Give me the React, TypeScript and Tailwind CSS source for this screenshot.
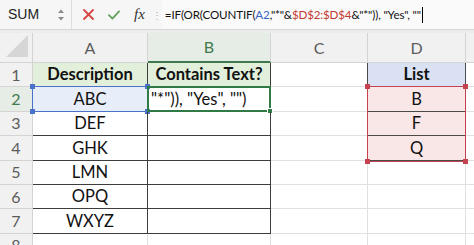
import React from "react";

const COLS = ["w-[33px]", "w-[115px]", "w-[123px]", "w-[97px]", "w-[98px]", "flex-1"];

const NAMES = ["Description", "ABC", "DEF", "GHK", "LMN", "OPQ", "WXYZ", ""];
const LIST = ["List", "B", "F", "Q"];

function Handle({ pos, color }: { pos: string; color: string }) {
  return <span className={`absolute w-[5px] h-[5px] ${pos} ${color}`} />;
}

export default function App() {
  return (
    <div className="w-[474px] h-[245px] overflow-hidden bg-white font-['Lato',sans-serif] text-[#111]">
      {/* Formula bar */}
      <div className="flex items-center h-[30px] bg-[#f6f6f6] border-b border-[#d6d6d6]">
        <div className="w-[72px] h-full flex items-center justify-between pl-[8px] pr-[6px] border-r border-[#dedede]">
          <span className="text-[14px] text-[#222] font-['Liberation_Sans',sans-serif]">SUM</span>
          <svg width="8" height="14" viewBox="0 0 8 14">
            <path d="M1 5 L4 1.5 L7 5 Z" fill="#8a8a8a" />
            <path d="M1 9 L4 12.5 L7 9 Z" fill="#8a8a8a" />
          </svg>
        </div>
        <div className="flex items-center h-full">
          <svg className="ml-[11px]" width="11" height="11" viewBox="0 0 11 11">
            <path d="M1 1 L10 10 M10 1 L1 10" stroke="#d64541" strokeWidth="1.8" strokeLinecap="round" />
          </svg>
          <svg className="ml-[14px]" width="12" height="10" viewBox="0 0 12 10">
            <path d="M1 5.2 L4.4 8.6 L11 1.4" stroke="#62a05d" strokeWidth="1.8" fill="none" strokeLinecap="round" strokeLinejoin="round" />
          </svg>
          <span className="ml-[14px] text-[15px] italic text-[#333] font-['Liberation_Serif',serif] leading-none">fx</span>
          <span className="ml-[7px] text-[10px] text-[#b0b0b0] leading-none">⋮</span>
        </div>
        <div className="flex-1 h-full flex items-center bg-[#fafafa] pl-[3px] text-[11.6px] tracking-[-0.15px] whitespace-nowrap">
          <span>=IF(OR(COUNTIF(</span>
          <span className="text-[#3b62be]">A2</span>
          <span>,"*"&amp;</span>
          <span className="text-[#c23b32]">$D$2:$D$4</span>
          <span>&amp;"*")), "Yes", ""</span>
          <span className="w-[1px] h-[16px] bg-black ml-[1px]" />
        </div>
      </div>
      <div className="h-[3px] bg-[#ececec]" />

      {/* Column headers */}
      <div className="flex h-[30px] bg-[#f1f1f1] text-[16px] text-[#5c5c5c]">
        <div className={`${COLS[0]} relative border-r border-b border-[#d4d4d4]`}>
          <svg className="absolute right-[4px] bottom-[5px]" width="22" height="22" viewBox="0 0 22 22">
            <path d="M22 0 L22 22 L0 22 Z" fill="#d6d6d6" />
          </svg>
        </div>
        <div className={`${COLS[1]} flex items-center justify-center border-r border-b border-[#d4d4d4]`}>A</div>
        <div className={`${COLS[2]} flex items-center justify-center border-r border-b-2 border-r-[#d4d4d4] border-b-[#3f7a4c] bg-[#e6ece6] text-[#3f7a4c]`}>B</div>
        <div className={`${COLS[3]} flex items-center justify-center border-r border-b border-[#d4d4d4]`}>C</div>
        <div className={`${COLS[4]} flex items-center justify-center border-r border-b border-[#d4d4d4]`}>D</div>
        <div className={`${COLS[5]} border-b border-[#d4d4d4]`} />
      </div>

      {/* Rows */}
      {NAMES.map((name, i) => {
        const r = i + 1;
        const inTable = r <= 7;
        const header = r === 1;
        return (
          <div key={r} className="flex h-[24.4px] text-[16.5px]">
            <div
              className={`${COLS[0]} flex items-center justify-center border-r border-b border-[#d4d4d4] text-[16px] ${
                r === 2 ? "bg-[#e6ece6] text-[#3f7a4c]" : "bg-[#f1f1f1] text-[#5c5c5c]"
              }`}
            >
              {r}
            </div>
            <div
              className={`${COLS[1]} relative flex items-center justify-center border-r border-b ${
                inTable ? "border-[#3d3d3d]" : "border-[#e0e0e0]"
              } ${header ? "bg-[#e2efda] font-bold" : ""} ${r === 2 ? "bg-[#e8eef9]" : ""}`}
            >
              {name}
              {r === 2 && (
                <div className="absolute -left-px -top-px -right-px -bottom-px border-[1.5px] border-[#4a72c8]">
                  <Handle pos="-left-[3px] -top-[3px]" color="bg-[#4a72c8]" />
                  <Handle pos="-right-[3px] -top-[3px]" color="bg-[#4a72c8]" />
                  <Handle pos="-left-[3px] -bottom-[3px]" color="bg-[#4a72c8]" />
                  <Handle pos="-right-[3px] -bottom-[3px]" color="bg-[#4a72c8]" />
                </div>
              )}
            </div>
            <div
              className={`${COLS[2]} relative flex items-center border-r border-b whitespace-nowrap ${
                inTable ? "border-[#3d3d3d]" : "border-[#e0e0e0]"
              } ${header ? "bg-[#e2efda] font-bold justify-center" : "pl-[3px]"}`}
            >
              {header ? "Contains Text?" : r === 2 ? '"*")), "Yes", "")' : ""}
              {r === 2 && (
                <div className="absolute -left-px -top-px -right-px -bottom-px border-2 border-[#2f7a45]">
                  <span className="absolute -right-[4px] -bottom-[4px] w-[6px] h-[6px] bg-[#2f7a45] border border-white" />
                </div>
              )}
            </div>
            <div
              className={`${COLS[3]} border-r border-b border-[#e0e0e0] ${r <= 4 ? "border-r-[#4a4a4a]" : ""}`}
            />
            <div
              className={`${COLS[4]} relative flex items-center justify-center border-r border-b ${
                r <= 4 ? "border-[#4a4a4a]" : "border-[#e0e0e0]"
              } ${r === 1 ? "bg-[#d9e1f2] font-bold" : r <= 4 ? "bg-[#f9e6e6]" : ""}`}
            >
              {LIST[i] ?? ""}
              {r === 2 && (
                <div className="absolute -left-px -top-px -right-px h-[75.2px] border-[1.5px] border-[#c4434e] z-10">
                  <Handle pos="-left-[3px] -top-[3px]" color="bg-[#c4434e]" />
                  <Handle pos="-right-[3px] -top-[3px]" color="bg-[#c4434e]" />
                  <Handle pos="-left-[3px] -bottom-[3px]" color="bg-[#c4434e]" />
                  <Handle pos="-right-[3px] -bottom-[3px]" color="bg-[#c4434e]" />
                </div>
              )}
            </div>
            <div className={`${COLS[5]} border-b border-[#e0e0e0]`} />
          </div>
        );
      })}
    </div>
  );
}
